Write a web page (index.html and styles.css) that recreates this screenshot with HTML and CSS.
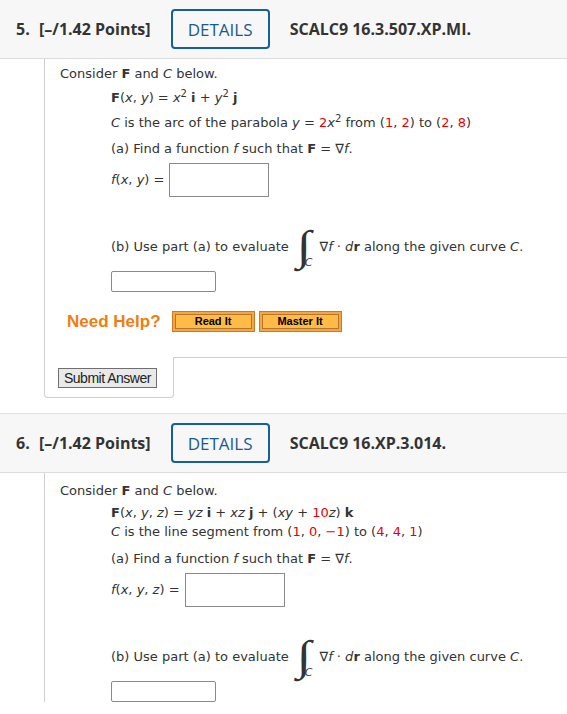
FILE: index.html
```html
<!DOCTYPE html>
<html>
<head>
<meta charset="utf-8">
<link rel="stylesheet" href="styles.css">
</head>
<body>
<div class="page">
  <div class="qhead">
    <span class="num">5.</span><span class="pts">[–/1.42 Points]</span>
    <button class="details">DETAILS</button>
    <span class="code">SCALC9 16.3.507.XP.MI.</span>
  </div>
  <div class="qbody">
    <div class="content">
      <p class="line">Consider <b class="bf">F</b> and <i>C</i> below.</p>
      <div class="indent">
        <p class="line l-f"><b class="bf">F</b>(<i>x</i>, <i>y</i>) = <i>x</i><sup>2</sup> <b class="bf">i</b> + <i>y</i><sup>2</sup> <b class="bf">j</b></p>
        <p class="line l-c"><i>C</i> is the arc of the parabola <i>y</i> = <span class="red">2</span><i>x</i><sup>2</sup> from (<span class="red">1</span>, <span class="red">2</span>) to (<span class="red">2</span>, <span class="red">8</span>)</p>
        <p class="line l-a">(a) Find a function <i>f</i> such that <b class="bf">F</b> = ∇<i>f</i>.</p>
        <div class="frow"><span class="line"><i>f</i>(<i>x</i>, <i>y</i>) =</span><span class="box-big"></span></div>
        <div class="brow"><span class="line btxt">(b) Use part (a) to evaluate</span><span class="intg"><span class="int">∫</span><i class="intc">C</i></span><span class="line btxt">∇<i>f</i> · <i>d</i><b class="bf">r</b> along the given curve <i>C</i>.</span></div>
        <div class="box-small"></div>
      </div>
      <div class="help">
        <span class="needhelp">Need Help?</span>
        <button class="hbtn"><span class="hin">Read It</span></button>
        <button class="hbtn"><span class="hin">Master It</span></button>
      </div>
    </div>
    <div class="bottom">
      <div class="tab"><button class="submit">Submit Answer</button></div>
      <div class="rest"></div>
    </div>
  </div>

  <div class="qhead">
    <span class="num">6.</span><span class="pts">[–/1.42 Points]</span>
    <button class="details">DETAILS</button>
    <span class="code">SCALC9 16.XP.3.014.</span>
  </div>
  <div class="qbody q2">
    <div class="content">
      <p class="line">Consider <b class="bf">F</b> and <i>C</i> below.</p>
      <div class="indent">
        <p class="line l-f2"><b class="bf">F</b>(<i>x</i>, <i>y</i>, <i>z</i>) = <i>yz</i> <b class="bf">i</b> + <i>xz</i> <b class="bf">j</b> + (<i>xy</i> + <span class="red">10</span><i>z</i>) <b class="bf">k</b></p>
        <p class="line l-c2"><i>C</i> is the line segment from (<span class="red">1</span>, <span class="red">0</span>, <span class="red">−1</span>) to (<span class="red">4</span>, <span class="red">4</span>, <span class="red">1</span>)</p>
        <p class="line l-a2">(a) Find a function <i>f</i> such that <b class="bf">F</b> = ∇<i>f</i>.</p>
        <div class="frow"><span class="line"><i>f</i>(<i>x</i>, <i>y</i>, <i>z</i>) =</span><span class="box-big"></span></div>
        <div class="brow"><span class="line btxt">(b) Use part (a) to evaluate</span><span class="intg"><span class="int">∫</span><i class="intc">C</i></span><span class="line btxt">∇<i>f</i> · <i>d</i><b class="bf">r</b> along the given curve <i>C</i>.</span></div>
        <div class="box-small"></div>
      </div>
    </div>
  </div>
</div>
</body>
</html>
```
FILE: styles.css
```css
body {
  margin: 0;
  background: #fff;
  font-family: "DejaVu Sans", Verdana, sans-serif;
  color: #333;
}
.page {
  margin-top: -1px;
}
.qhead {
  display: flex;
  align-items: center;
  height: 58px;
  background: #f7f7f7;
  border-top: 1px solid #e2e2e2;
  border-bottom: 1px solid #dcdcdc;
  padding-left: 16px;
  font-family: "Open Sans", sans-serif;
  font-weight: 700;
  font-size: 16px;
  color: #333;
}
.num {
  width: 23px;
}
.details {
  margin: 0 20px;
  width: 99px;
  height: 40px;
  box-sizing: border-box;
  border: 2px solid #15609a;
  border-radius: 4px;
  background: transparent;
  color: #1a5a90;
  font-family: "Open Sans", sans-serif;
  font-size: 17px;
  font-weight: 500;
  padding: 0;
}
.qbody {
  margin-left: 44px;
}
.content {
  border-left: 1px solid #cfcfcf;
  padding: 7px 0 0 15px;
}
.q2 .content {
  padding-top: 10px;
}
.line {
  margin: 0;
  font-size: 13px;
  line-height: 16px;
}
.line sup {
  font-size: 10px;
  line-height: 0;
}
.bf {
  font-weight: 700;
}
.red {
  color: #e80000;
}
.indent {
  padding-left: 51px;
  padding-top: 8px;
}
.q2 .indent {
  padding-top: 6px;
}
.l-c {
  margin-top: 9px;
}
.l-c2 {
  margin-top: 3px;
}
.l-a {
  margin-top: 10px;
}
.l-a2 {
  margin-top: 11px;
}
.frow {
  display: flex;
  align-items: center;
  gap: 5px;
  margin-top: 6px;
}
.box-big {
  display: block;
  width: 100px;
  height: 34px;
  box-sizing: border-box;
  border: 1px solid #8a8a8a;
}
.brow {
  display: flex;
  align-items: flex-start;
  height: 38px;
  margin-top: 33px;
}
.btxt {
  margin-top: 9px;
}
.intg {
  display: flex;
  height: 38px;
  margin: 0 7px 0 6px;
}
.int {
  font-family: "Liberation Serif", serif;
  font-weight: 400;
  font-size: 42px;
  line-height: 38px;
  display: block;
  width: 10px;
  transform: translate(3px, -3px) scale(1.25, 1.02);
  transform-origin: 50% 50%;
  color: #333;
}
.intc {
  font-size: 11px;
  line-height: 11px;
  margin-top: 27px;
  margin-left: 0;
}
.box-small {
  width: 105px;
  height: 21px;
  box-sizing: border-box;
  border: 1px solid #8a8a8a;
  border-radius: 2px;
  margin-top: 3px;
}
.help {
  display: flex;
  align-items: center;
  margin: 19px 0 0 7px;
  padding-bottom: 25px;
}
.needhelp {
  font-family: "Liberation Sans", Arial, sans-serif;
  font-weight: 700;
  font-size: 17px;
  color: #ef7d11;
  margin-right: 11px;
}
.hbtn {
  width: 83px;
  height: 21px;
  padding: 2px;
  box-sizing: border-box;
  border: 1px solid #c87a2e;
  background: #f6a63c;
  margin-right: 4px;
}
.hin {
  display: block;
  height: 100%;
  box-sizing: border-box;
  border: 1px solid #b4752f;
  background: #ffbb45;
  font-family: "Liberation Sans", Arial, sans-serif;
  font-weight: 700;
  font-size: 11px;
  line-height: 13px;
  color: #000;
}
.bottom {
  display: flex;
  margin-bottom: 15px;
}
.tab {
  width: 130px;
  box-sizing: border-box;
  border: 1px solid #cfcfcf;
  border-top: none;
  border-radius: 0 0 4px 4px;
  padding: 11px 0 9px 13px;
}
.rest {
  flex: 1;
  border-top: 1px solid #cfcfcf;
}
.submit {
  display: block;
  height: 20px;
  box-sizing: border-box;
  border: 1px solid #6f6f6f;
  background: #e9e9e9;
  font-family: "Liberation Sans", Arial, sans-serif;
  font-size: 14px;
  letter-spacing: -0.5px;
  color: #222;
  padding: 0 5px;
}
```
